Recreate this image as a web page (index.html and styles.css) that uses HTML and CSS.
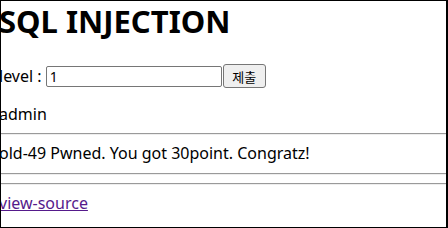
FILE: index.html
```html
<!DOCTYPE html>
<html lang="ko">
<head>
    <meta charset="UTF-8">
    <title>Challenge 49</title>
    <link rel="stylesheet" href="styles.css">
</head>
<body>
    <div class="frame"></div>
    <div class="page">
        <h1>SQL INJECTION</h1>
        <form class="level-form">level : <input type="text" name="lv" value="1" class="level-input"><input type="submit" value="제출" class="submit-btn"></form>
        admin<hr>old-49 Pwned. You got 30point. Congratz!<hr><hr><a href="#" class="source-link">view-source</a>
    </div>
</body>
</html>
```

FILE: styles.css
```css
body {
    margin: 0;
    font-family: "Noto Sans", "Noto Sans CJK KR", sans-serif;
    font-size: 16px;
    line-height: 1.33;
    color: #000;
    background: #fff;
}

.frame {
    position: fixed;
    top: 0;
    left: 0;
    right: 0;
    bottom: 0;
    border: 1px solid #000;
    border-right-width: 2px;
    pointer-events: none;
}

.page {
    margin-left: -1px;
}

h1 {
    margin: 0 0 21px 0;
    font-size: 31px;
    line-height: 43px;
}

.level-form {
    margin: 0 0 16px 0;
}

.level-input {
    box-sizing: border-box;
    width: 176px;
    height: 21px;
    padding: 1px 3px;
    border: 1px solid #767676;
    border-radius: 2px;
    font-family: "Noto Sans", "Noto Sans CJK KR", sans-serif;
    font-size: 14px;
}

.submit-btn {
    box-sizing: border-box;
    width: 43px;
    height: 24px;
    margin-left: 1px;
    padding: 0 6px;
    border: 1px solid #767676;
    border-radius: 3px;
    background: #efefef;
    font-family: "Noto Sans CJK KR", sans-serif;
    font-size: 13px;
}

hr {
    margin: 8px 0;
}

.source-link {
    color: #551a8b;
}
```
